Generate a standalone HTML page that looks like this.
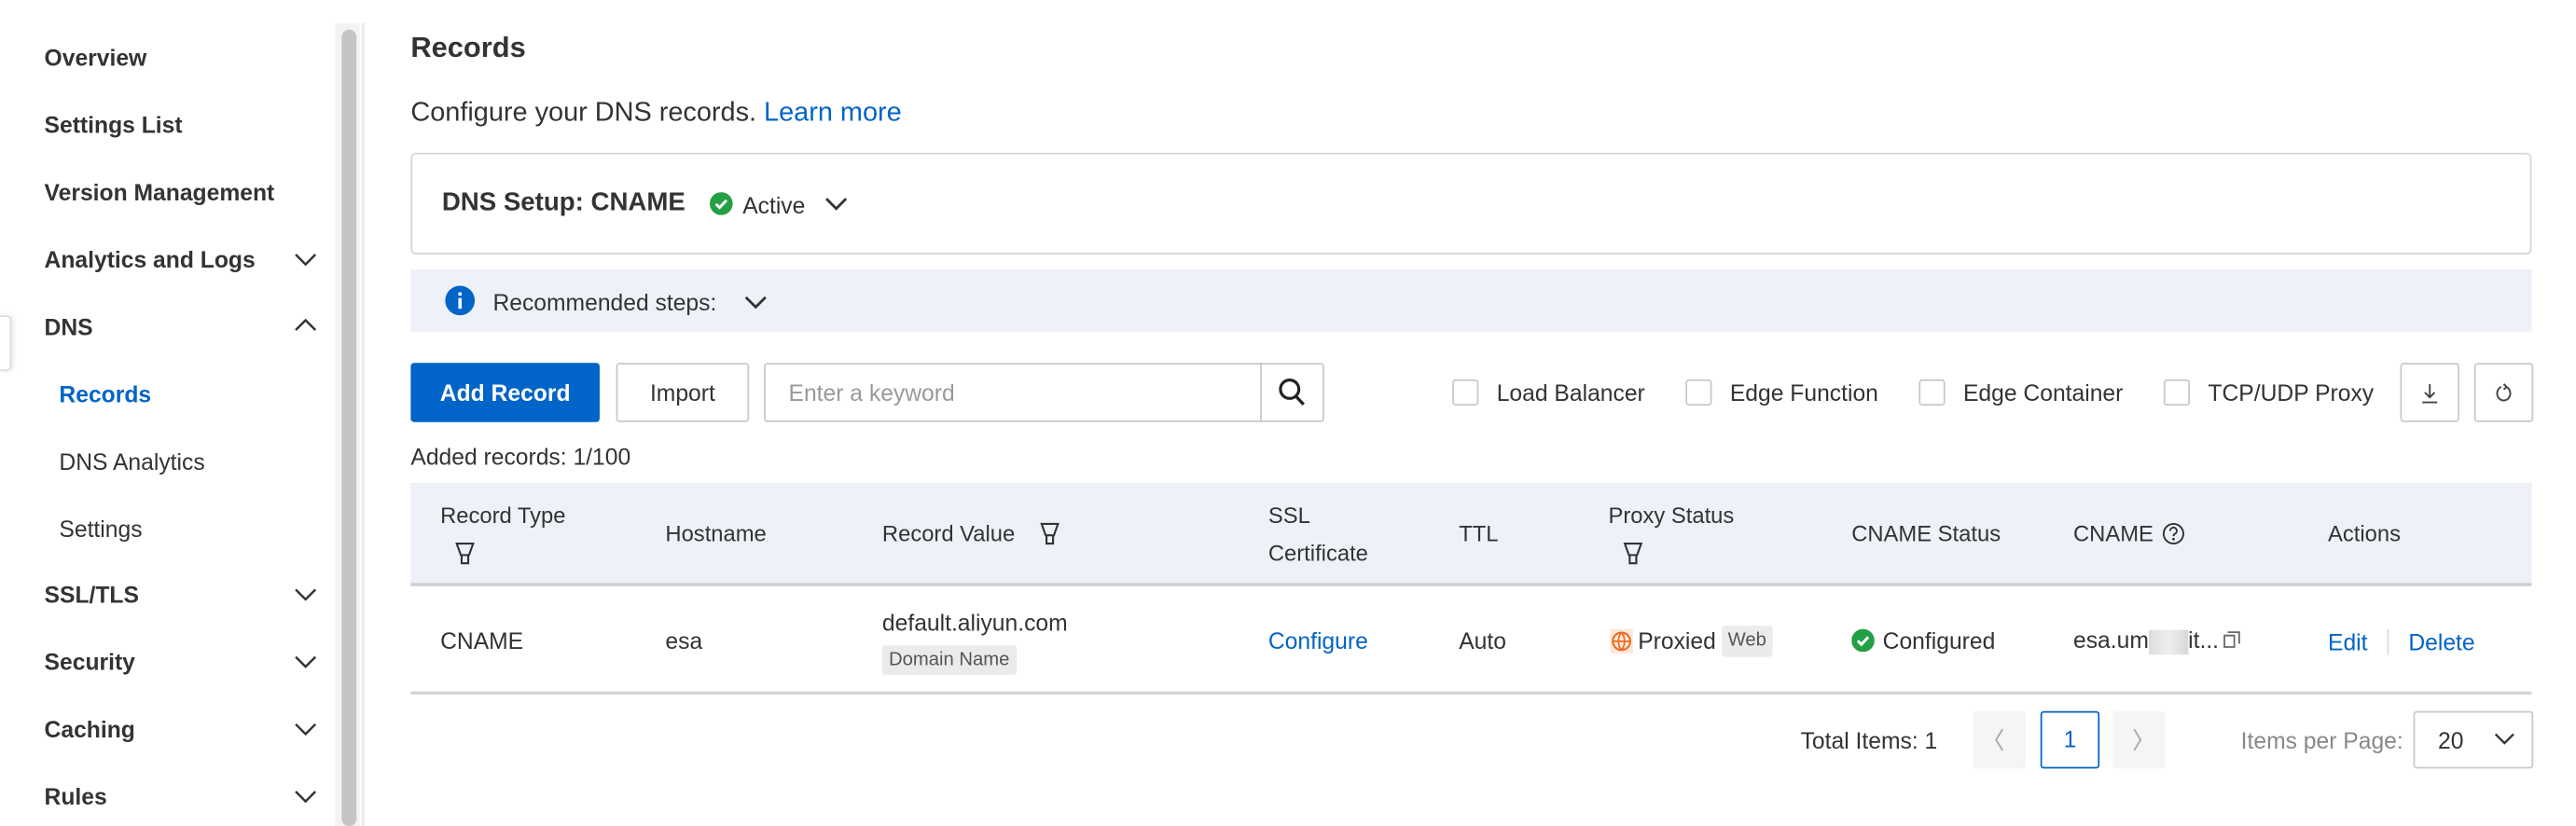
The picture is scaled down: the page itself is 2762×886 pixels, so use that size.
<!DOCTYPE html>
<html><head><meta charset="utf-8"><style>
*{box-sizing:border-box;margin:0;padding:0}
html,body{width:2762px;height:886px;overflow:hidden;background:#fff}
#w{position:absolute;left:0;top:0;width:1568px;height:503px;transform:scale(1.76148);transform-origin:0 0;font-family:"Liberation Sans",Arial,sans-serif;color:#333;font-size:14px}
.a{position:absolute;white-space:nowrap}
.nav{left:27px;font-weight:bold;font-size:14px;color:#333;transform:translateY(-50%)}
.sub{left:36px;font-size:14px;transform:translateY(-50%)}
.chev{position:absolute;left:179px;width:14px;height:8px}
.m{transform:translateY(-50%)}
.cb{position:absolute;width:16px;height:16px;border:1px solid #c8c8c8;border-radius:2px;top:231px}
.th{font-size:13.5px;color:#333}
.blue{color:#0064c8}
</style></head><body><div id="w">
<div class="a nav" style="top:35px">Overview</div>
<div class="a nav" style="top:76px">Settings List</div>
<div class="a nav" style="top:117px">Version Management</div>
<div class="a nav" style="top:158px">Analytics and Logs</div>
<div class="a nav" style="top:199px">DNS</div>
<div class="a sub blue" style="top:240px;font-weight:bold">Records</div>
<div class="a sub" style="top:281px">DNS Analytics</div>
<div class="a sub" style="top:322px">Settings</div>
<div class="a nav" style="top:362px">SSL/TLS</div>
<div class="a nav" style="top:403px">Security</div>
<div class="a nav" style="top:444px">Caching</div>
<div class="a nav" style="top:485px">Rules</div>
<svg class="chev" style="top:154px" viewBox="0 0 14 8"><path d="M1 1l6 6 6-6" fill="none" stroke="#333" stroke-width="1.4"/></svg>
<svg class="chev" style="top:194px" viewBox="0 0 14 8"><path d="M1 7l6-6 6 6" fill="none" stroke="#333" stroke-width="1.4"/></svg>
<svg class="chev" style="top:358px" viewBox="0 0 14 8"><path d="M1 1l6 6 6-6" fill="none" stroke="#333" stroke-width="1.4"/></svg>
<svg class="chev" style="top:399px" viewBox="0 0 14 8"><path d="M1 1l6 6 6-6" fill="none" stroke="#333" stroke-width="1.4"/></svg>
<svg class="chev" style="top:440px" viewBox="0 0 14 8"><path d="M1 1l6 6 6-6" fill="none" stroke="#333" stroke-width="1.4"/></svg>
<svg class="chev" style="top:481px" viewBox="0 0 14 8"><path d="M1 1l6 6 6-6" fill="none" stroke="#333" stroke-width="1.4"/></svg>
<div class="a" style="left:0;top:192px;width:7px;height:34px;background:#fff;border:1px solid #ddd;border-left:none;border-radius:0 3px 3px 0;box-shadow:1px 0 3px rgba(0,0,0,.1)"></div>
<div class="a" style="left:204px;top:14px;width:15px;height:489px;background:#f3f3f3"></div>
<div class="a" style="left:208px;top:18px;width:9px;height:485px;background:#c4c4c4;border-radius:5px"></div>
<div class="a" style="left:220px;top:14px;width:2px;height:489px;background:#ececec"></div>
<div class="a m" style="left:250px;top:29px;font-size:17.5px;font-weight:bold">Records</div>
<div class="a m" style="left:250px;top:69px;font-size:16.4px">Configure your DNS records. <span class="blue">Learn more</span></div>
<div class="a" style="left:250px;top:93px;width:1291px;height:62px;border:1px solid #d6d6d6;border-radius:3px"></div>
<div class="a m" style="left:269px;top:124px;font-size:15.7px;font-weight:bold">DNS Setup: CNAME</div>
<svg class="a" style="left:432px;top:117px" width="14" height="14" viewBox="0 0 14 14"><circle cx="7" cy="7" r="7" fill="#23a045"/><path d="M3.8 7.2l2.2 2.2 4.2-4.4" fill="none" stroke="#fff" stroke-width="1.7"/></svg>
<div class="a m" style="left:452px;top:125px;font-size:14px">Active</div>
<svg class="a" style="left:502px;top:120px" width="14" height="9" viewBox="0 0 14 9"><path d="M1 1l6 6 6-6" fill="none" stroke="#333" stroke-width="1.6"/></svg>
<div class="a" style="left:250px;top:164px;width:1291px;height:38px;background:#eef1f8"></div>
<svg class="a" style="left:270px;top:173px" width="20" height="20" viewBox="0 0 20 20"><circle cx="10" cy="10" r="9" fill="#0064c8"/><rect x="9" y="8.5" width="2" height="6.5" fill="#fff"/><rect x="9" y="5" width="2" height="2" fill="#fff"/></svg>
<div class="a m" style="left:300px;top:184px;font-size:14px">Recommended steps:</div>
<svg class="a" style="left:453px;top:180px" width="14" height="9" viewBox="0 0 14 9"><path d="M1 1l6 6 6-6" fill="none" stroke="#333" stroke-width="1.6"/></svg>
<div class="a" style="left:250px;top:221px;width:115px;height:36px;background:#0064c8;border-radius:2px;color:#fff;font-weight:bold;font-size:14px;text-align:center;line-height:36px">Add Record</div>
<div class="a" style="left:375px;top:221px;width:81px;height:36px;border:1px solid #c8c8c8;border-radius:2px;font-size:14px;text-align:center;line-height:34px">Import</div>
<div class="a" style="left:465px;top:221px;width:341px;height:36px;border:1px solid #c8c8c8;border-radius:2px"></div>
<div class="a" style="left:767px;top:221px;width:1px;height:36px;background:#c8c8c8"></div>
<div class="a m" style="left:480px;top:239px;font-size:14px;color:#999">Enter a keyword</div>
<svg class="a" style="left:778px;top:230px" width="17" height="18" viewBox="0 0 17 18"><circle cx="7" cy="7" r="5.6" fill="none" stroke="#222" stroke-width="1.8"/><path d="M11 11.5l4.5 4.8" stroke="#222" stroke-width="1.9"/></svg>
<div class="cb" style="left:884px"></div><div class="a m" style="left:911px;top:239px">Load Balancer</div>
<div class="cb" style="left:1026px"></div><div class="a m" style="left:1053px;top:239px">Edge Function</div>
<div class="cb" style="left:1168px"></div><div class="a m" style="left:1195px;top:239px">Edge Container</div>
<div class="cb" style="left:1317px"></div><div class="a m" style="left:1344px;top:239px">TCP/UDP Proxy</div>
<div class="a" style="left:1461px;top:221px;width:36px;height:36px;border:1px solid #c8c8c8;border-radius:2px"></div>
<svg class="a" style="left:1473px;top:233px" width="12" height="13" viewBox="0 0 12 13"><path d="M6 1v8M3 6l3 3 3-3M1.5 12h9" fill="none" stroke="#444" stroke-width="1.1"/></svg>
<div class="a" style="left:1506px;top:221px;width:36px;height:36px;border:1px solid #c8c8c8;border-radius:2px"></div>
<svg class="a" style="left:1518px;top:233px" width="12" height="13" viewBox="0 0 12 13"><path d="M7.5 2.6A4 4.3 0 1 1 4.5 2.6" fill="none" stroke="#444" stroke-width="1.1"/><path d="M6 0.8l1.8 1.8L6 4.2" fill="none" stroke="#444" stroke-width="1.1"/></svg>
<div class="a m" style="left:250px;top:278px">Added records: 1/100</div>
<div class="a" style="left:250px;top:294px;width:1291px;height:63px;background:#eef1f8;border-bottom:2px solid #d0d0d0"></div>
<div class="a m th" style="left:268px;top:314px">Record Type</div>
<svg class="a" style="left:277px;top:330px" width="12" height="15" viewBox="0 0 12 15"><path d="M1 1h10L8.5 8H3.5z M4 8.5v4.5h4V8.5" fill="none" stroke="#333" stroke-width="1.2"/></svg>
<div class="a m th" style="left:405px;top:325px">Hostname</div>
<div class="a m th" style="left:537px;top:325px">Record Value</div>
<svg class="a" style="left:633px;top:318px" width="12" height="15" viewBox="0 0 12 15"><path d="M1 1h10L8.5 8H3.5z M4 8.5v4.5h4V8.5" fill="none" stroke="#333" stroke-width="1.2"/></svg>
<div class="a m th" style="left:772px;top:314px">SSL</div>
<div class="a m th" style="left:772px;top:337px">Certificate</div>
<div class="a m th" style="left:888px;top:325px">TTL</div>
<div class="a m th" style="left:979px;top:314px">Proxy Status</div>
<svg class="a" style="left:988px;top:330px" width="12" height="15" viewBox="0 0 12 15"><path d="M1 1h10L8.5 8H3.5z M4 8.5v4.5h4V8.5" fill="none" stroke="#333" stroke-width="1.2"/></svg>
<div class="a m th" style="left:1127px;top:325px">CNAME Status</div>
<div class="a m th" style="left:1262px;top:325px">CNAME</div>
<svg class="a" style="left:1316px;top:318px" width="14" height="14" viewBox="0 0 14 14"><circle cx="7" cy="7" r="6" fill="none" stroke="#333" stroke-width="1.1"/><path d="M5 5.3a2 2 0 1 1 2.8 1.8c-.6.3-.8.7-.8 1.4" fill="none" stroke="#333" stroke-width="1.1"/><circle cx="7" cy="10.3" r=".8" fill="#333"/></svg>
<div class="a m th" style="left:1417px;top:325px">Actions</div>
<div class="a" style="left:250px;top:421px;width:1291px;height:2px;background:#d6d6d6"></div>
<div class="a m" style="left:268px;top:390px">CNAME</div>
<div class="a m" style="left:405px;top:390px">esa</div>
<div class="a m" style="left:537px;top:379px">default.aliyun.com</div>
<div class="a" style="left:537px;top:393px;height:18px;padding:0 4px;background:#ebebeb;border-radius:2px;font-size:11.5px;line-height:18px;color:#555">Domain Name</div>
<div class="a m blue" style="left:772px;top:390px">Configure</div>
<div class="a m" style="left:888px;top:390px">Auto</div>
<svg class="a" style="left:980px;top:383px" width="14" height="15" viewBox="0 0 14 15"><rect width="14" height="15" fill="#fde9dc"/><circle cx="7" cy="7.5" r="5.3" fill="none" stroke="#ef6b1f" stroke-width="1.2"/><path d="M1.8 7.5h10.4M7 2.2c-2.5 3-2.5 7.6 0 10.6M7 2.2c2.5 3 2.5 7.6 0 10.6" fill="none" stroke="#ef6b1f" stroke-width="1"/></svg>
<div class="a m" style="left:997px;top:390px">Proxied</div>
<div class="a" style="left:1048px;top:381px;width:31px;height:19px;background:#ebebeb;border-radius:2px;font-size:11.5px;line-height:19px;text-align:center;color:#555">Web</div>
<svg class="a" style="left:1127px;top:383px" width="14" height="14" viewBox="0 0 14 14"><circle cx="7" cy="7" r="7" fill="#23a045"/><path d="M3.8 7.2l2.2 2.2 4.2-4.4" fill="none" stroke="#fff" stroke-width="1.7"/></svg>
<div class="a m" style="left:1146px;top:390px">Configured</div>
<div class="a m" style="left:1262px;top:390px">esa.um<span style="display:inline-block;width:24px;height:15px;background:linear-gradient(90deg,#ddd,#eee,#d8d8d8);vertical-align:middle"></span>it...</div>
<svg class="a" style="left:1353px;top:384px" width="11" height="11" viewBox="0 0 11 11"><path d="M3 1h7v7M1 3h6v7H1z" fill="none" stroke="#666" stroke-width="1"/></svg>
<div class="a m blue" style="left:1417px;top:391px">Edit</div>
<div class="a" style="left:1453px;top:383px;width:1px;height:16px;background:#ddd"></div>
<div class="a m blue" style="left:1466px;top:391px">Delete</div>
<div class="a m" style="left:1096px;top:451px">Total Items: 1</div>
<div class="a" style="left:1201px;top:433px;width:32px;height:35px;background:#f5f5f5;border-radius:2px"></div>
<svg class="a" style="left:1213px;top:443px" width="8" height="15" viewBox="0 0 8 15"><path d="M6 1L2 7.5 6 14" fill="none" stroke="#aaa" stroke-width="1.1"/></svg>
<div class="a" style="left:1242px;top:433px;width:36px;height:35px;border:1px solid #0064c8;border-radius:2px;text-align:center;line-height:33px;color:#0064c8">1</div>
<div class="a" style="left:1286px;top:433px;width:32px;height:35px;background:#f5f5f5;border-radius:2px"></div>
<svg class="a" style="left:1297px;top:443px" width="8" height="15" viewBox="0 0 8 15"><path d="M2 1l4 6.5L2 14" fill="none" stroke="#aaa" stroke-width="1.1"/></svg>
<div class="a m" style="left:1364px;top:451px;color:#888">Items per Page:</div>
<div class="a" style="left:1469px;top:433px;width:73px;height:35px;border:1px solid #c8c8c8;border-radius:2px"></div>
<div class="a m" style="left:1484px;top:451px">20</div>
<svg class="a" style="left:1518px;top:446px" width="13" height="8" viewBox="0 0 13 8"><path d="M1 1l5.5 5.5L12 1" fill="none" stroke="#333" stroke-width="1.3"/></svg>
</div></body></html>
